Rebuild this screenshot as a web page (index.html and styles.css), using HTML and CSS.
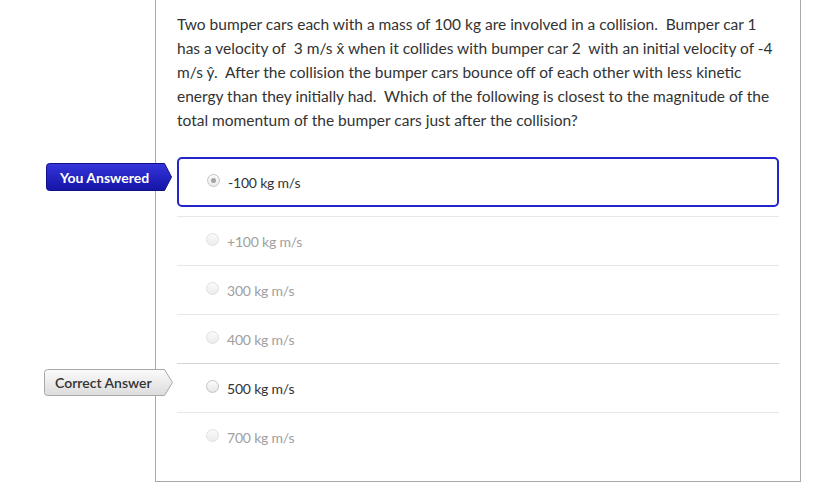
FILE: index.html
```html
<!DOCTYPE html>
<html lang="en">
<head>
    <meta charset="UTF-8">
    <title>Quiz Results</title>
    <link rel="stylesheet" href="styles.css">
</head>
<body>
<div class="question">
    <div class="question-text">
        Two bumper cars each with a mass of 100 kg are involved in a collision.&nbsp; Bumper car 1 has a velocity of &nbsp;3 m/s x&#770; when it collides with bumper car 2 &nbsp;with an initial velocity of -4 m/s y&#770;.&nbsp; After the collision the bumper cars bounce off of each other with less kinetic energy than they initially had.&nbsp; Which of the following is closest to the magnitude of the total momentum of the bumper cars just after the collision?
    </div>
    <div class="answers">
        <div class="answer selected">
            <div class="badge you-answered">
                <svg width="127" height="28" viewBox="0 0 127 28">
                    <defs>
                        <linearGradient id="blueGrad" x1="0" y1="0" x2="0" y2="1">
                            <stop offset="0" stop-color="#3535dc"/>
                            <stop offset="1" stop-color="#1414a6"/>
                        </linearGradient>
                    </defs>
                    <path d="M3.5,0.5 H118.5 L125.5,14 L118.5,27.5 H3.5 Q0.5,27.5 0.5,24.5 V3.5 Q0.5,0.5 3.5,0.5 Z" fill="url(#blueGrad)" stroke="#10108a"/>
                </svg>
                <span>You Answered</span>
            </div>
            <span class="radio checked"></span>
            <span class="answer-text">-100 kg m/s</span>
        </div>
        <div class="answer">
            <span class="radio"></span>
            <span class="answer-text">+100 kg m/s</span>
        </div>
        <div class="answer">
            <span class="radio"></span>
            <span class="answer-text">300 kg m/s</span>
        </div>
        <div class="answer">
            <span class="radio"></span>
            <span class="answer-text">400 kg m/s</span>
        </div>
        <div class="answer correct">
            <div class="badge correct-answer">
                <svg width="130" height="27" viewBox="0 0 130 27">
                    <defs>
                        <linearGradient id="grayGrad" x1="0" y1="0" x2="0" y2="1">
                            <stop offset="0" stop-color="#fbfbfb"/>
                            <stop offset="1" stop-color="#dcdcdc"/>
                        </linearGradient>
                    </defs>
                    <path d="M3.5,0.5 H120.5 L128.5,13.5 L120.5,26.5 H3.5 Q0.5,26.5 0.5,23.5 V3.5 Q0.5,0.5 3.5,0.5 Z" fill="url(#grayGrad)" stroke="#a8a8a8"/>
                </svg>
                <span>Correct Answer</span>
            </div>
            <span class="radio"></span>
            <span class="answer-text">500 kg m/s</span>
        </div>
        <div class="answer">
            <span class="radio"></span>
            <span class="answer-text">700 kg m/s</span>
        </div>
    </div>
</div>
</body>
</html>
```

FILE: styles.css
```css
body {
    margin: 0;
    padding: 0;
    background-color: #fff;
    font-family: Lato, "Open Sans", Arial, sans-serif;
}

.question {
    margin-left: 155px;
    width: 602px;
    padding: 12px 21px 20px 21px;
    border: 1px solid #a9a9a9;
    border-top: none;
}

.question-text {
    font-size: 15.5px;
    line-height: 24px;
    color: #333;
}

.answers {
    margin-top: 25px;
}

.answer {
    position: relative;
    display: flex;
    align-items: center;
    height: 48px;
    border-top: 1px solid #e8e8e8;
    font-size: 14px;
    color: #a0a0a0;
}

.answer.selected {
    height: 50px;
    box-sizing: border-box;
    border: 2px solid #2424cc;
    border-radius: 5px;
    margin-bottom: 9px;
    color: #333;
}

.answer.correct {
    border-top-color: #d6d6d6;
    color: #333;
}

.radio {
    display: inline-block;
    width: 11px;
    height: 11px;
    margin-left: 29px;
    margin-right: 8px;
    margin-top: -3px;
    border: 1px solid #e0e0e0;
    border-radius: 50%;
    background: linear-gradient(#fafafa, #ececec);
    position: relative;
}

.answer.selected .radio {
    margin-left: 28px;
    border-color: #c4c4c4;
}

.answer.correct .radio {
    border-color: #c4c4c4;
    background: linear-gradient(#fdfdfd, #e6e6e6);
}

.radio.checked::after {
    content: "";
    position: absolute;
    left: 3px;
    top: 3px;
    width: 5px;
    height: 5px;
    border-radius: 50%;
    background-color: #a4a4a4;
}

.answer-text {
    letter-spacing: -0.2px;
}

.badge {
    position: absolute;
    display: flex;
    align-items: center;
    font-size: 14px;
    font-weight: bold;
}

.badge svg {
    position: absolute;
    left: 0;
    top: 0;
}

.badge span {
    position: relative;
}

.you-answered {
    left: -133px;
    top: 4px;
    width: 127px;
    height: 28px;
    color: #fff;
}

.you-answered span {
    padding-left: 14px;
}

.correct-answer {
    left: -133px;
    top: 5px;
    width: 130px;
    height: 27px;
    color: #333;
}

.correct-answer span {
    padding-left: 11px;
    font-weight: 600;
}
```
